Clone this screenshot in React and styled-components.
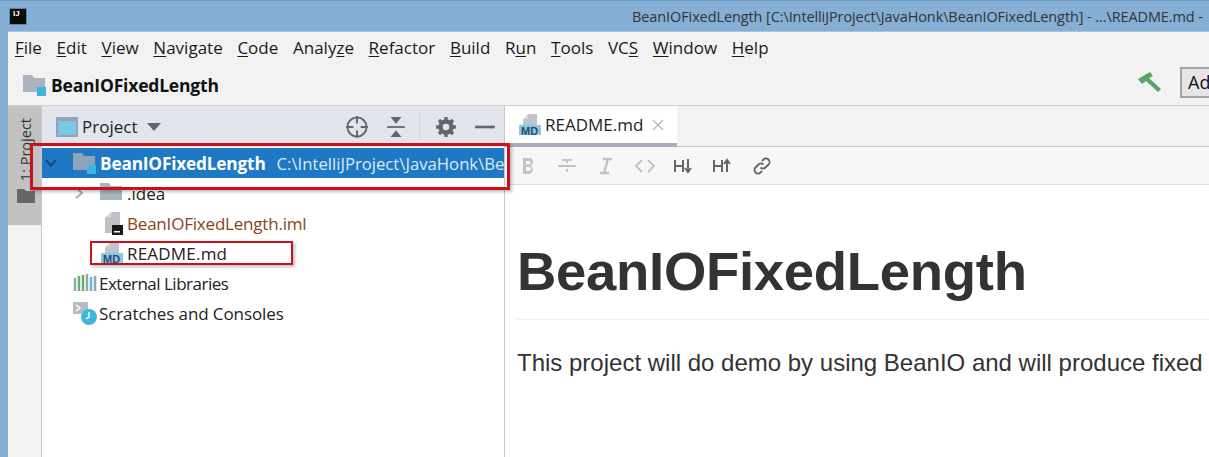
import styled, { createGlobalStyle } from 'styled-components'

const Global = createGlobalStyle`
    html, body {
        margin: 0;
        padding: 0;
        background: #ffffff;
        overflow: hidden;
    }
    svg {
        flex: none;
    }
`

const Frame = styled.div`
    position: relative;
    width: 1209px;
    height: 457px;
    overflow: hidden;
    background: #86afd5;
    font-family: "Open Sans", "Noto Sans", sans-serif;
    color: #1a1a1a;
`

const TitleBar = styled.div`
    height: 31px;
    padding-left: 10px;
    display: flex;
    align-items: center;
    box-sizing: border-box;
    border-top: 1px solid #6d9cc5;
    white-space: nowrap;
    overflow: hidden;
`

const AppLogo = styled.div`
    width: 16px;
    height: 15px;
    background: #0a0a0a;
    box-shadow: 0 0 0 1px #5a86b5;
    color: #fff;
    font: bold 8px/10px "Liberation Sans", sans-serif;
    padding-left: 3px;
    box-sizing: border-box;
    flex: none;
`

const WindowTitle = styled.div`
    margin-left: 606px;
    font-size: 14.5px;
    letter-spacing: -0.1px;
    color: #333;
`

const Client = styled.div`
    margin-left: 8px;
    height: 426px;
    background: #f2f2f2;
    border-top: 1px solid #a9c3dc;
    display: flex;
    flex-direction: column;
`

const MenuBar = styled.div`
    height: 32px;
    padding: 0 0 2px 7px;
    box-sizing: border-box;
    display: flex;
    align-items: center;
    gap: 14.7px;
    font-size: 17px;
`

const Mnemonic = styled.span`
    text-decoration: underline;
    text-underline-offset: 2px;
    text-decoration-thickness: 1px;
`

const NavBar = styled.div`
    height: 42px;
    padding: 0 0 0 15px;
    display: flex;
    align-items: center;
    border-bottom: 1px solid #d1d1d1;
    box-sizing: border-box;
`

const NavName = styled.span`
    font-weight: 700;
    font-size: 17.5px;
    margin-left: 4px;
    letter-spacing: -0.2px;
    color: #111;
`

const NavRight = styled.div`
    margin-left: auto;
    display: flex;
    align-items: center;
    gap: 17px;
`

const AddButton = styled.div`
    width: 29px;
    height: 31px;
    margin-bottom: 5px;
    background: #e6e6e6;
    border: 2px solid #a3a3a3;
    border-right: 0;
    box-sizing: border-box;
    padding-left: 6px;
    font-size: 18px;
    line-height: 27px;
    color: #111;
`

const Workspace = styled.div`
    flex: 1;
    display: flex;
    min-height: 0;
`

const ToolStrip = styled.div`
    width: 33px;
    flex: none;
    border-right: 1px solid #c9c9c9;
`

const ToolTab = styled.div`
    height: 119px;
    background: #c2c2c2;
    display: flex;
    flex-direction: column;
    align-items: center;
    padding: 12px 0 0 2px;
    box-sizing: border-box;
    gap: 8px;
`

const ToolLabel = styled.div`
    writing-mode: vertical-rl;
    transform: rotate(180deg);
    font-size: 14.5px;
    line-height: 18px;
    color: #333;
    white-space: nowrap;
`

const ProjectPane = styled.div`
    width: 462px;
    flex: none;
    background: #fff;
    border-right: 1px solid #c9c9c9;
    display: flex;
    flex-direction: column;
`

const PaneHeader = styled.div`
    height: 41px;
    background: #e2e5ee;
    display: flex;
    align-items: center;
    padding-left: 13px;
    flex: none;
    box-sizing: border-box;
`

const PaneTitle = styled.span`
    font-size: 17px;
    margin-left: 3px;
    color: #222;
`

const PaneTools = styled.div`
    margin-left: auto;
    display: flex;
    align-items: center;
    height: 100%;
`

const ToolIcon = styled.div`
    width: 39px;
    display: flex;
    justify-content: center;
    align-items: center;
`

const ToolDivider = styled.div`
    width: 1px;
    height: 26px;
    background: #cfd2da;
    margin: 0 6px 0 4px;
`

const Tree = styled.div`
    padding-top: 1px;
    font-size: 17px;
`

const Row = styled.div`
    height: 30px;
    display: flex;
    align-items: center;
    padding-left: ${(p) => p.$indent}px;
    background: ${(p) => (p.$selected ? '#1f78c4' : 'transparent')};
    color: ${(p) => p.$color || (p.$selected ? '#fff' : '#222')};
    white-space: nowrap;
    overflow: hidden;
`

const RowName = styled.span`
    margin-left: ${(p) => p.$gap ?? 2}px;
    font-size: ${(p) => (p.$bold ? 17.3 : 17)}px;
    font-weight: ${(p) => (p.$bold ? 700 : 400)};
    letter-spacing: ${(p) => p.$track ?? 0}px;
`

const RowPath = styled.span`
    margin-left: 11px;
    color: #dceaf6;
    font-size: 16.7px;
`

const Spacer = styled.span`
    width: ${(p) => p.$w}px;
    flex: none;
`

const Editor = styled.div`
    flex: 1;
    min-width: 0;
    background: #fff;
    display: flex;
    flex-direction: column;
`

const TabBar = styled.div`
    height: 41px;
    background: #f2f2f2;
    border-bottom: 1px solid #c9c9c9;
    box-sizing: border-box;
    flex: none;
    display: flex;
`

const EditorTab = styled.div`
    width: 172px;
    height: 41px;
    background: #fff;
    border-bottom: 4px solid #a8adbd;
    box-sizing: border-box;
    display: flex;
    align-items: center;
    padding-left: 13px;
    font-size: 17px;
    color: #222;
    gap: 3px;
`

const CloseMark = styled.span`
    margin-left: 6px;
    display: flex;
`

const Toolbar = styled.div`
    height: 38px;
    flex: none;
    padding-left: 10px;
    border-bottom: 1px solid #dcdcdc;
    display: flex;
    align-items: center;
    gap: 13px;
    box-sizing: border-box;
    background: #f7f7f7;
`

const FormatIcon = styled.div`
    width: 26px;
    display: flex;
    justify-content: center;
`

const Preview = styled.div`
    padding: 52px 0 0 12px;
    font-family: "Liberation Sans", Arial, sans-serif;
    color: #333;
    white-space: nowrap;
`

const Heading = styled.h1`
    margin: 0;
    font-size: 54.5px;
    font-weight: 700;
    line-height: 70px;
    height: 82px;
    border-bottom: 1px solid #eeeeee;
    letter-spacing: -0.3px;
`

const Paragraph = styled.p`
    margin: 28px 0 0;
    font-size: 24px;
    line-height: 30px;
`

const RedBox = styled.div`
    position: absolute;
    left: ${(p) => p.$x}px;
    top: ${(p) => p.$y}px;
    width: ${(p) => p.$w}px;
    height: ${(p) => p.$h}px;
    border: ${(p) => p.$t}px solid #c8101e;
    box-sizing: border-box;
    box-shadow: 2px 2px 3px rgba(0, 0, 0, 0.25);
`

const FolderIcon = ({ color = '#a9b4c0', badge }) => (
    <svg width="24" height="22" viewBox="0 0 24 22">
        <path d="M0 1h9l2 3h11v14H0z" fill={color} />
        {badge && <rect x="14" y="13" width="9" height="9" fill={badge} />}
    </svg>
)

const FileIcon = () => (
    <svg width="22" height="24" viewBox="0 0 22 24">
        <path d="M10 1h8v21H3V7z" fill="#bcc1c8" />
        <path d="M9 1v5H4z" fill="#d6d9dd" />
        <rect x="10" y="14" width="11" height="10" fill="#1a1a1a" />
        <rect x="12" y="20" width="6" height="1.5" fill="#fff" />
    </svg>
)

const MdIcon = () => (
    <svg width="24" height="24" viewBox="0 0 24 24">
        <path d="M11 1h8v11H5V7z" fill="#c0c5cb" />
        <path d="M10 1v5H5z" fill="#d6d9dd" />
        <rect x="1" y="12" width="22" height="10" fill="#8cc7e6" />
        <text x="3" y="21.5" fontSize="11" fontWeight="700" fontFamily="Liberation Sans" fill="#27506b">MD</text>
    </svg>
)

const Chevron = ({ open, color }) => (
    <svg width="14" height="14" viewBox="0 0 14 14">
        <path d={open ? 'M2 4l5 6 5-6' : 'M4 2l6 5-6 5'} fill="none" stroke={color} strokeWidth="2" />
    </svg>
)

const Glyph = ({ children, w = 20, h = 20 }) => (
    <svg width={w} height={h} viewBox="0 0 20 20">{children}</svg>
)

export default function App() {
    return (
        <Frame>
            <Global />
            <TitleBar>
                <AppLogo>IJ</AppLogo>
                <WindowTitle>BeanIOFixedLength [C:\IntelliJProject\JavaHonk\BeanIOFixedLength] - ...\README.md -</WindowTitle>
            </TitleBar>
            <Client>
                <MenuBar>
                    <span><Mnemonic>F</Mnemonic>ile</span>
                    <span><Mnemonic>E</Mnemonic>dit</span>
                    <span><Mnemonic>V</Mnemonic>iew</span>
                    <span><Mnemonic>N</Mnemonic>avigate</span>
                    <span><Mnemonic>C</Mnemonic>ode</span>
                    <span>Analy<Mnemonic>z</Mnemonic>e</span>
                    <span><Mnemonic>R</Mnemonic>efactor</span>
                    <span><Mnemonic>B</Mnemonic>uild</span>
                    <span>R<Mnemonic>u</Mnemonic>n</span>
                    <span><Mnemonic>T</Mnemonic>ools</span>
                    <span>VC<Mnemonic>S</Mnemonic></span>
                    <span><Mnemonic>W</Mnemonic>indow</span>
                    <span><Mnemonic>H</Mnemonic>elp</span>
                </MenuBar>
                <NavBar>
                    <FolderIcon badge="#3fb4dc" />
                    <NavName>BeanIOFixedLength</NavName>
                    <NavRight>
                        <svg width="26" height="22" viewBox="0 0 26 22" style={{ marginBottom: 5 }}>
                            <path d="M1 8l12-7 3 4-4 2 12 11-3 3L9 10l-4 3z" fill="#57a56b" />
                        </svg>
                        <AddButton>Ad</AddButton>
                    </NavRight>
                </NavBar>
                <Workspace>
                    <ToolStrip>
                        <ToolTab>
                            <ToolLabel>1: Project</ToolLabel>
                            <svg width="18" height="14" viewBox="0 0 18 14">
                                <path d="M0 0h7l2 2h9v12H0z" fill="#666" />
                            </svg>
                        </ToolTab>
                    </ToolStrip>
                    <ProjectPane>
                        <PaneHeader>
                            <svg width="24" height="22" viewBox="0 0 24 22">
                                <rect x="1" y="1" width="22" height="20" fill="#9aa2ad" />
                                <rect x="3" y="5" width="18" height="14" fill="#79c8e6" />
                            </svg>
                            <PaneTitle>Project</PaneTitle>
                            <svg width="32" height="12" viewBox="0 0 32 12">
                                <path d="M10 2h14l-7 8z" fill="#666" />
                            </svg>
                            <PaneTools>
                                <ToolIcon>
                                    <Glyph w={24} h={24}>
                                        <circle cx="10" cy="10" r="8" fill="none" stroke="#666" strokeWidth="1.6" />
                                        <path d="M10 1v6M10 13v6M1 10h6M13 10h6" stroke="#666" strokeWidth="1.6" />
                                    </Glyph>
                                </ToolIcon>
                                <ToolIcon>
                                    <Glyph w={22} h={22}>
                                        <path d="M2 10h16" stroke="#666" strokeWidth="1.6" />
                                        <path d="M5 1h10l-5 6zM5 19h10l-5-6z" fill="#666" />
                                    </Glyph>
                                </ToolIcon>
                                <ToolDivider />
                                <ToolIcon>
                                    <Glyph w={22} h={22}>
                                        <circle cx="10" cy="10" r="5" fill="none" stroke="#666" strokeWidth="4" />
                                        <path d="M10 1v4M10 15v4M1 10h4M15 10h4M3.6 3.6l3 3M13.4 13.4l3 3M16.4 3.6l-3 3M6.6 13.4l-3 3" stroke="#666" strokeWidth="3" />
                                    </Glyph>
                                </ToolIcon>
                                <ToolIcon>
                                    <Glyph w={22} h={22}>
                                        <path d="M1 10h18" stroke="#666" strokeWidth="2.4" />
                                    </Glyph>
                                </ToolIcon>
                            </PaneTools>
                        </PaneHeader>
                        <Tree>
                            <Row $selected $indent={2}>
                                <Chevron open color="#17497a" />
                                <Spacer $w={15} />
                                <FolderIcon color="#8da3b8" badge="#3fb4dc" />
                                <RowName $bold $gap={3} $track={-0.2}>BeanIOFixedLength</RowName>
                                <RowPath>C:\IntelliJProject\JavaHonk\Be</RowPath>
                            </Row>
                            <Row $indent={30}>
                                <Chevron color="#aaa" />
                                <Spacer $w={14} />
                                <FolderIcon />
                                <RowName $gap={3}>.idea</RowName>
                            </Row>
                            <Row $indent={60} $color="#8a3f1c">
                                <FileIcon />
                                <RowName $gap={3} $track={-0.2}>BeanIOFixedLength.iml</RowName>
                            </Row>
                            <Row $indent={58}>
                                <MdIcon />
                                <RowName $gap={3} $track={0.2}>README.md</RowName>
                            </Row>
                            <Row $indent={31}>
                                <svg width="24" height="20" viewBox="0 0 24 20">
                                    <path d="M2 5v13" stroke="#9aa2ad" strokeWidth="2.5" />
                                    <path d="M6 3v15" stroke="#62b06f" strokeWidth="2.5" />
                                    <path d="M10 2v16" stroke="#62b06f" strokeWidth="2.5" />
                                    <path d="M14 1v17" stroke="#9aa2ad" strokeWidth="2.5" />
                                    <path d="M18 4v14" stroke="#5fb8de" strokeWidth="2.5" />
                                    <path d="M22 3v15" stroke="#9aa2ad" strokeWidth="2.5" />
                                </svg>
                                <RowName $track={-0.5}>External Libraries</RowName>
                            </Row>
                            <Row $indent={31}>
                                <svg width="24" height="24" viewBox="0 0 24 24">
                                    <path d="M0 1h15v12H0z" fill="#b6bcc4" />
                                    <path d="M3 4l4 3-4 3" fill="none" stroke="#fff" strokeWidth="1.5" />
                                    <circle cx="16" cy="16" r="8" fill="#3fb4dc" />
                                    <path d="M16 11v5l-3 2" fill="none" stroke="#fff" strokeWidth="1.5" />
                                </svg>
                                <RowName $track={-0.1}>Scratches and Consoles</RowName>
                            </Row>
                        </Tree>
                    </ProjectPane>
                    <Editor>
                        <TabBar>
                            <EditorTab>
                                <MdIcon />
                                README.md
                                <CloseMark>
                                    <svg width="12" height="12" viewBox="0 0 12 12">
                                        <path d="M1 1l10 10M11 1L1 11" stroke="#b5b5b5" strokeWidth="1.2" />
                                    </svg>
                                </CloseMark>
                            </EditorTab>
                        </TabBar>
                        <Toolbar>
                            <FormatIcon>
                                <Glyph>
                                    <path d="M5 2h6a4 4 0 0 1 1.5 7.7A4.5 4.5 0 0 1 11 18H5zM8 5v3.5h3a1.7 1.7 0 0 0 0-3.5zM8 11v4h3a2 2 0 0 0 0-4z" fill="#c2c2c2" fillRule="evenodd" />
                                </Glyph>
                            </FormatIcon>
                            <FormatIcon>
                                <Glyph>
                                    <path d="M1 10h18M5 4h10M10 4v3M10 13v3" stroke="#c2c2c2" strokeWidth="2" fill="none" />
                                </Glyph>
                            </FormatIcon>
                            <FormatIcon>
                                <Glyph>
                                    <path d="M7 3h9M4 17h9M12 3L8 17" stroke="#c2c2c2" strokeWidth="2.4" fill="none" />
                                </Glyph>
                            </FormatIcon>
                            <FormatIcon>
                                <Glyph w={24} h={20}>
                                    <path d="M7 4l-6 6 6 6M13 4l6 6-6 6" stroke="#c2c2c2" strokeWidth="1.8" fill="none" />
                                </Glyph>
                            </FormatIcon>
                            <FormatIcon>
                                <Glyph w={22} h={20}>
                                    <path d="M1 4v12M9 4v12M1 10h8" stroke="#666" strokeWidth="2" fill="none" />
                                    <path d="M14 3v12M11 12l3 4 3-4" stroke="#666" strokeWidth="2" fill="none" />
                                </Glyph>
                            </FormatIcon>
                            <FormatIcon>
                                <Glyph w={22} h={20}>
                                    <path d="M1 4v12M9 4v12M1 10h8" stroke="#666" strokeWidth="2" fill="none" />
                                    <path d="M14 16V5M11 8l3-4 3 4" stroke="#666" strokeWidth="2" fill="none" />
                                </Glyph>
                            </FormatIcon>
                            <FormatIcon>
                                <Glyph>
                                    <path d="M8.5 11.5a3.5 3.5 0 0 0 5 0l3-3a3.5 3.5 0 0 0-5-5l-1.5 1.5M11.5 8.5a3.5 3.5 0 0 0-5 0l-3 3a3.5 3.5 0 0 0 5 5l1.5-1.5" stroke="#666" strokeWidth="1.8" fill="none" />
                                </Glyph>
                            </FormatIcon>
                        </Toolbar>
                        <Preview>
                            <Heading>BeanIOFixedLength</Heading>
                            <Paragraph>This project will do demo by using BeanIO and will produce fixed</Paragraph>
                        </Preview>
                    </Editor>
                </Workspace>
            </Client>
            <RedBox $x={30} $y={143} $w={480} $h={47} $t={3} />
            <RedBox $x={90} $y={241} $w={203} $h={24} $t={2} />
        </Frame>
    )
}
